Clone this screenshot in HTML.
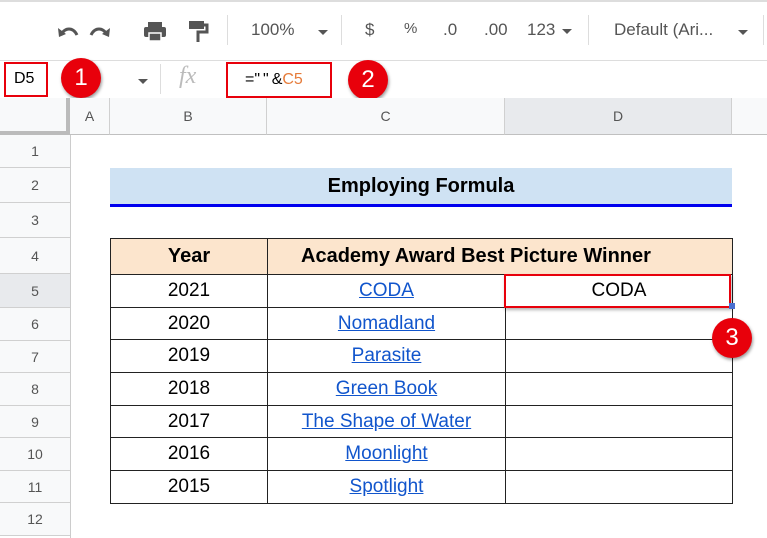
<!DOCTYPE html>
<html><head><style>
*{margin:0;padding:0;box-sizing:border-box}
body{width:767px;height:538px;overflow:hidden;background:#fff;font-family:"Liberation Sans",Arial,sans-serif;position:relative}
.abs{position:absolute}
.tb{color:#555;font-size:17px}
.circ{position:absolute;width:40px;height:40px;border-radius:50%;background:#e8000b;color:#fff;font-size:24px;text-align:center;line-height:40px;box-shadow:1px 2px 3px rgba(0,0,0,.4)}
.rh{position:absolute;left:0;width:70px;text-align:center;color:#555;font-size:14px;border-bottom:1px solid #d0d0d0;background:#f8f9fa}
.ch{position:absolute;top:98px;height:37px;line-height:37px;text-align:center;color:#555;font-size:14px;border-right:1px solid #d0d0d0;background:#f8f9fa;border-bottom:1px solid #c0c0c0}
table{position:absolute;left:110px;top:238px;border-collapse:collapse;font-size:19px;table-layout:fixed;width:622px}
td{border:1.5px solid #222;text-align:center;height:32.7px;padding:0;white-space:nowrap}
a{color:#1155cc;text-decoration:underline}
</style></head><body>
<div class="abs" style="left:0;top:0;width:767px;height:2px;background:#ddd"></div>
<svg class="abs" style="top:20px;left:55px" width="60" height="24" viewBox="0 0 60 24">
<path d="M6 15 C10 7 18 7 22 15" stroke="#555" stroke-width="3" fill="none"/><path d="M3 8 L4 17 L11 14 Z" fill="#555"/>
<path d="M52 15 C48 7 40 7 36 15" stroke="#555" stroke-width="3" fill="none"/><path d="M55 8 L54 17 L47 14 Z" fill="#555"/>
</svg>
<svg class="abs" style="left:142px;top:20px" width="28" height="24"><rect x="6" y="2" width="14" height="5" fill="#555"/><rect x="2" y="7" width="22" height="10" rx="2" fill="#555"/><rect x="7" y="13" width="12" height="8" fill="#555" stroke="#fff" stroke-width="1.5"/></svg>
<svg class="abs" style="left:188px;top:20px" width="22" height="24"><rect x="1" y="1" width="15" height="8" fill="#555"/><path d="M16 5 H19 V12 H10 V22" stroke="#555" stroke-width="3" fill="none"/></svg>
<div class="abs" style="left:227px;top:15px;width:1px;height:30px;background:#ddd"></div>
<div class="abs tb" style="left:251px;top:20px">100%</div>
<div class="abs" style="left:318px;top:30px;border:5px solid transparent;border-top-color:#555"></div>
<div class="abs" style="left:341px;top:15px;width:1px;height:30px;background:#ddd"></div>
<div class="abs tb" style="left:365px;top:20px">$</div>
<div class="abs tb" style="left:404px;top:20px;font-size:15px">%</div>
<div class="abs tb" style="left:443px;top:20px">.0</div>
<div class="abs tb" style="left:484px;top:20px">.00</div>
<div class="abs tb" style="left:527px;top:20px">123</div>
<div class="abs" style="left:562px;top:29px;border:5px solid transparent;border-top-color:#555"></div>
<div class="abs" style="left:588px;top:15px;width:1px;height:30px;background:#ddd"></div>
<div class="abs tb" style="left:614px;top:20px">Default (Ari...</div>
<div class="abs" style="left:738px;top:30px;border:5px solid transparent;border-top-color:#555"></div>
<div class="abs" style="left:763px;top:15px;width:1px;height:30px;background:#ddd"></div>
<div class="abs" style="left:0;top:60px;width:767px;height:1px;background:#ddd"></div>
<div class="abs" style="left:4px;top:62px;width:44px;height:35px;border:2.5px solid #e8000b;font-size:16px;line-height:30px;padding-left:8px">D5</div>
<div class="circ" style="left:61px;top:58px">1</div>
<div class="abs" style="left:138px;top:79px;border:5px solid transparent;border-top-color:#555"></div>
<div class="abs" style="left:160px;top:64px;width:1px;height:30px;background:#ddd"></div>
<div class="abs" style="left:179px;top:63px;font-family:'Liberation Serif',serif;font-style:italic;color:#bbb;font-size:24px">fx</div>
<div class="abs" style="left:226px;top:62px;width:106px;height:36px;border:2.5px solid #e8000b;font-size:16px;line-height:31px;padding-left:17px">=<span style="letter-spacing:3px">""</span>&amp;<span style="color:#e67c3b">C5</span></div>
<div class="circ" style="left:348px;top:60px">2</div>
<div class="abs" style="left:0;top:98px;width:767px;height:1px;background:#ccc"></div>
<div class="abs" style="left:0;top:98px;width:70px;height:37px;background:#f8f9fa;border-right:4px solid #bbb;border-bottom:4px solid #bbb"></div>
<div class="ch" style="left:70px;width:40px">A</div>
<div class="ch" style="left:110px;width:157px">B</div>
<div class="ch" style="left:267px;width:238px">C</div>
<div class="ch" style="left:505px;width:227px;background:#e8eaed">D</div>
<div class="ch" style="left:732px;width:40px"></div>
<div class="abs" style="left:70px;top:135px;width:1px;height:403px;background:#ccc"></div>
<div class="rh" style="top:135px;height:33px;line-height:33px">1</div>
<div class="rh" style="top:168px;height:35px;line-height:35px">2</div>
<div class="rh" style="top:203px;height:35px;line-height:35px">3</div>
<div class="rh" style="top:238px;height:36px;line-height:36px">4</div>
<div class="rh" style="top:274px;height:34px;line-height:34px;background:#e8eaed">5</div>
<div class="rh" style="top:308px;height:33px;line-height:33px">6</div>
<div class="rh" style="top:341px;height:32px;line-height:32px">7</div>
<div class="rh" style="top:373px;height:33px;line-height:33px">8</div>
<div class="rh" style="top:406px;height:32px;line-height:32px">9</div>
<div class="rh" style="top:438px;height:33px;line-height:33px">10</div>
<div class="rh" style="top:471px;height:32px;line-height:32px">11</div>
<div class="rh" style="top:503px;height:33px;line-height:33px">12</div>
<div class="abs" style="left:110px;top:168px;width:622px;height:39px;background:#cfe2f3;border-bottom:3px solid #0000ee;text-align:center;font-weight:bold;font-size:20px;line-height:37px">Employing Formula</div>
<table>
<colgroup><col style="width:157px"><col style="width:238px"><col style="width:227px"></colgroup>
<tr style="background:#fce5cd;font-weight:bold;font-size:20px"><td style="height:36px">Year</td><td colspan="2" style="text-align:left;padding-left:33px">Academy Award Best Picture Winner</td></tr>
<tr><td>2021</td><td><a>CODA</a></td><td>CODA</td></tr>
<tr><td>2020</td><td><a>Nomadland</a></td><td></td></tr>
<tr><td>2019</td><td><a>Parasite</a></td><td></td></tr>
<tr><td>2018</td><td><a>Green Book</a></td><td></td></tr>
<tr><td>2017</td><td><a>The Shape of Water</a></td><td></td></tr>
<tr><td>2016</td><td><a>Moonlight</a></td><td></td></tr>
<tr><td>2015</td><td><a>Spotlight</a></td><td></td></tr>
</table>
<div class="abs" style="left:504px;top:274px;width:227px;height:34px;border:2.5px solid #e8000b;box-shadow:1px 2px 3px rgba(0,0,0,.3)"></div>
<div class="abs" style="left:729px;top:303px;width:6px;height:6px;background:#4a6fd0"></div>
<div class="circ" style="left:712px;top:318px">3</div>
</body></html>
